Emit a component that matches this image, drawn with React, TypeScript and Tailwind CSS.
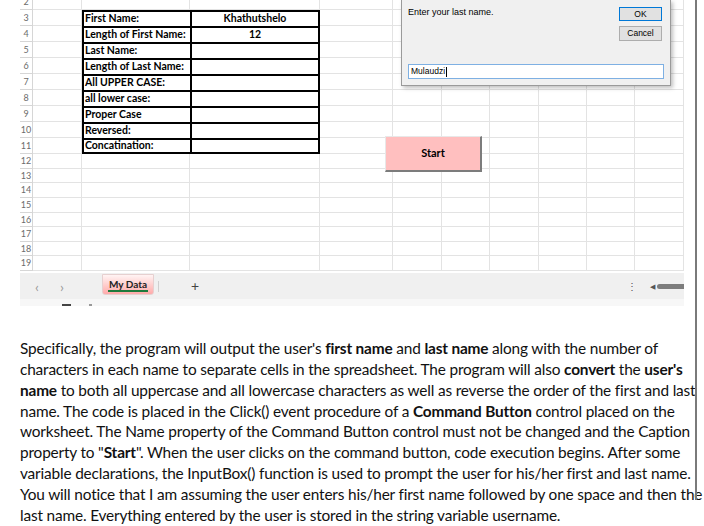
import React from 'react';

const colWidths = ['w-[49px]', 'w-[108px]', 'w-[130px]', 'w-[73px]', 'w-[49px]', 'w-[48px]', 'w-[49px]', 'w-[48px]', 'w-[48px]', 'w-[49px]'];

const tableRows: { label: string; value?: string }[] = [
    { label: 'First Name:', value: 'Khathutshelo' },
    { label: 'Length of First Name:', value: '12' },
    { label: 'Last Name:' },
    { label: 'Length of Last Name:' },
    { label: 'All UPPER CASE:' },
    { label: 'all lower case:' },
    { label: 'Proper Case' },
    { label: 'Reversed:' },
    { label: 'Concatination:' },
];

const RowHeader = ({ n }: { n: number }) => (
    <div className="w-[13px] shrink-0 h-full border-r border-b border-[#d6d6d6] flex items-center justify-center text-[9px] text-[#6b6b6b] overflow-hidden">
        {n}
    </div>
);

const PlainRow = ({ n, h }: { n: number; h: string }) => (
    <div className={`flex ${h}`}>
        <RowHeader n={n} />
        {colWidths.map((w, i) => (
            <div key={i} className={`${w} shrink-0 h-full border-r border-b border-[#e3e3e3]`} />
        ))}
    </div>
);

const TableRow = ({ n, label, value, last }: { n: number; label: string; value?: string; last: boolean }) => (
    <div className="flex h-[16px]">
        <RowHeader n={n} />
        <div className={`${colWidths[0]} shrink-0 h-full border-r border-b border-[#e3e3e3]`} />
        <div className={`${colWidths[1]} shrink-0 h-full border-l-2 border-t-2 border-black ${last ? 'border-b-2' : ''} pl-[1px] flex items-center text-[10.5px] font-bold text-black whitespace-nowrap`}>
            {label}
        </div>
        <div className={`${colWidths[2]} shrink-0 h-full border-l-2 border-t-2 border-r-2 border-black ${last ? 'border-b-2' : ''} flex items-center justify-center text-[10.5px] font-bold text-black`}>
            {value}
        </div>
        {colWidths.slice(3).map((w, i) => (
            <div key={i} className={`${w} shrink-0 h-full border-r border-b border-[#e3e3e3]`} />
        ))}
    </div>
);

const Dialog = () => (
    <div className="absolute left-[381px] top-0 w-[270px] h-[86px] bg-[#f0f0f0] border-l border-r border-b border-[#9a9a9a] shadow-[2px_2px_4px_rgba(0,0,0,0.25)] font-['Liberation_Sans',sans-serif]">
        <div className="flex pl-[6px] pr-[8px] pt-[6px]">
            <div className="flex-1 text-[9px] text-black">Enter your last name.</div>
            <div className="flex flex-col gap-[5px] mt-[1px]">
                <div className="w-[43px] h-[14px] bg-[#e1e1e1] border border-[#0078d7] flex items-center justify-center text-[8.5px] text-black">OK</div>
                <div className="w-[43px] h-[15px] bg-[#e1e1e1] border border-[#adadad] flex items-center justify-center text-[8.5px] text-black">Cancel</div>
            </div>
        </div>
        <div className="ml-[6px] mt-[23px] w-[256px] h-[15px] bg-white border border-[#7eb0e3] flex items-center pl-[2px] text-[8.5px] text-black">
            Mulaudzi<span className="inline-block w-px h-[10px] bg-black ml-px" />
        </div>
    </div>
);

const StartButton = () => (
    <div className="absolute left-[365px] top-[136px] w-[97px] h-[36px] bg-[#ffbfbf] border-t border-l border-[#e8e8e8] border-r-2 border-b-2 border-r-[#7c7c7c] border-b-[#7c7c7c] flex items-center justify-center text-[11px] font-bold text-black">
        Start
    </div>
);

const TabBar = () => (
    <div className="mt-[2px] h-[26px] bg-[#f0f0f0] flex items-center text-[#777]">
        <span className="ml-[15px] w-[10px] text-[14px] text-[#999]">‹</span>
        <span className="ml-[15px] w-[10px] text-[14px] text-[#999]">›</span>
        <div className="ml-[32px] self-start mt-[1px] w-[52px] h-[21px] rounded-b-[3px] bg-gradient-to-b from-[#fff4f4] to-[#ffaaaa] border border-[#e6d0d0] flex flex-col items-center justify-center">
            <span className="text-[10px] font-bold text-[#222] leading-[12px]">My Data</span>
            <span className="w-[40px] h-[2px] bg-[#1e7a3c]" />
        </div>
        <span className="ml-[4px] w-px h-[11px] bg-[#cfcfcf]" />
        <span className="ml-[32px] text-[14px] text-[#444] leading-none">+</span>
        <div className="flex-1" />
        <span className="text-[10px] text-[#555] leading-none">⋮</span>
        <span className="ml-[13px] text-[7px] text-[#555]">◀</span>
        <span className="ml-[2px] w-[27px] h-[5px] rounded-l-full bg-[#7d7d7d]" />
    </div>
);

const Line = ({ children }: { children: React.ReactNode }) => (
    <div className="whitespace-nowrap h-[20.85px] leading-[20.85px]">{children}</div>
);

export default function App() {
    return (
        <div className="w-[704px] h-[526px] bg-white overflow-hidden flex font-['Lato',sans-serif]">
            <div className="w-[695px] shrink-0 flex flex-col">
                <div className="ml-[20px] w-[664px] relative">
                    <div className="h-[10px] overflow-hidden">
                        <div className="-mt-[6px]">
                            <PlainRow n={2} h="h-[16px]" />
                        </div>
                    </div>
                    {tableRows.map((r, i) => (
                        <TableRow key={i} n={i + 3} label={r.label} value={r.value} last={i === tableRows.length - 1} />
                    ))}
                    {[12, 13, 14, 15, 16, 17, 18, 19].map(n => (
                        <PlainRow key={n} n={n} h="h-[14.625px]" />
                    ))}
                    <TabBar />
                    <div className="h-[7px] bg-[#f7f7f7] flex items-end">
                        <span className="ml-[42px] w-[9px] h-[2px] bg-[#444]" />
                        <span className="ml-[18px] w-[3px] h-[2px] bg-[#999]" />
                    </div>
                    <Dialog />
                    <StartButton />
                </div>
                <div className="mt-[32px] ml-[20px] text-[15.4px] tracking-[-0.17px] text-[#111]">
                    <Line>Specifically, the program will output the user's <b>first name</b> and <b>last name</b> along with the number of</Line>
                    <Line>characters in each name to separate cells in the spreadsheet. The program will also <b>convert</b> the <b>user's</b></Line>
                    <Line><b>name</b> to both all uppercase and all lowercase characters as well as reverse the order of the first and last</Line>
                    <Line>name. The code is placed in the Click() event procedure of a <b>Command Button</b> control placed on the</Line>
                    <Line>worksheet. The Name property of the Command Button control must not be changed and the Caption</Line>
                    <Line>property to "<b>Start</b>". When the user clicks on the command button, code execution begins. After some</Line>
                    <Line>variable declarations, the InputBox() function is used to prompt the user for his/her first and last name.</Line>
                    <Line>You will notice that I am assuming the user enters his/her first name followed by one space and then the</Line>
                    <Line>last name. Everything entered by the user is stored in the string variable username.</Line>
                </div>
            </div>
            <div className="w-[2px] h-[500px] bg-[#7a7a7a] shrink-0" />
        </div>
    );
}
